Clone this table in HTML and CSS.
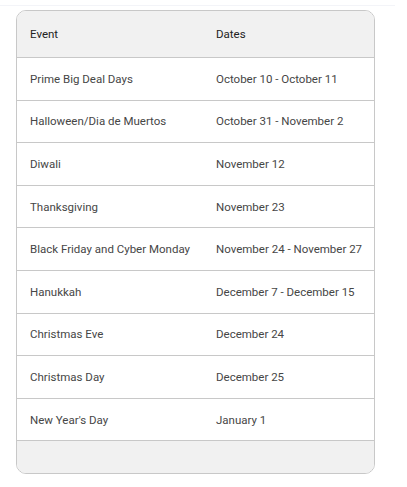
FILE: index.html
```html
<!DOCTYPE html>
<html>
<head>
<meta charset="utf-8">
<link rel="stylesheet" href="styles.css">
</head>
<body>
<div class="topline"></div>
<div class="wrap">
  <table class="events">
    <thead>
      <tr><th>Event</th><th>Dates</th></tr>
    </thead>
    <tbody>
      <tr><td>Prime Big Deal Days</td><td>October 10 - October 11</td></tr>
      <tr><td>Halloween/Dia de Muertos</td><td>October 31 - November 2</td></tr>
      <tr><td>Diwali</td><td>November 12</td></tr>
      <tr><td>Thanksgiving</td><td>November 23</td></tr>
      <tr><td>Black Friday and Cyber Monday</td><td>November 24 - November 27</td></tr>
      <tr><td>Hanukkah</td><td>December 7 - December 15</td></tr>
      <tr><td>Christmas Eve</td><td>December 24</td></tr>
      <tr><td>Christmas Day</td><td>December 25</td></tr>
      <tr><td>New Year's Day</td><td>January 1</td></tr>
    </tbody>
    <tfoot>
      <tr><td colspan="2"></td></tr>
    </tfoot>
  </table>
</div>
</body>
</html>
```
FILE: styles.css
```css
html, body {
  margin: 0;
  padding: 0;
  background: #ffffff;
}
body {
  font-family: Roboto, "Liberation Sans", sans-serif;
  font-size: 11.5px;
  color: #464646;
}
.topline {
  height: 1px;
  margin-top: 5px;
  margin-right: 12px;
  background: #f3f4f8;
}
.wrap {
  padding: 4px 0 0 16px;
}
.events {
  width: 359px;
  border-collapse: separate;
  border-spacing: 0;
  border: 1px solid #c8c8c8;
  border-radius: 10px;
  overflow: hidden;
}
.events th {
  background: #f1f1f1;
  font-weight: 400;
  color: #222;
  text-align: left;
  height: 46px;
  padding: 0 0 0 13px;
  border-bottom: 1px solid #c8c8c8;
}
.events th:first-child,
.events td:first-child {
  width: 173px;
}
.events td {
  height: 41.6px;
  padding: 0 0 0 13px;
  border-bottom: 1px solid #c8c8c8;
  white-space: nowrap;
}
.events tfoot td {
  background: #f1f1f1;
  height: 32px;
  border-bottom: none;
}
```
